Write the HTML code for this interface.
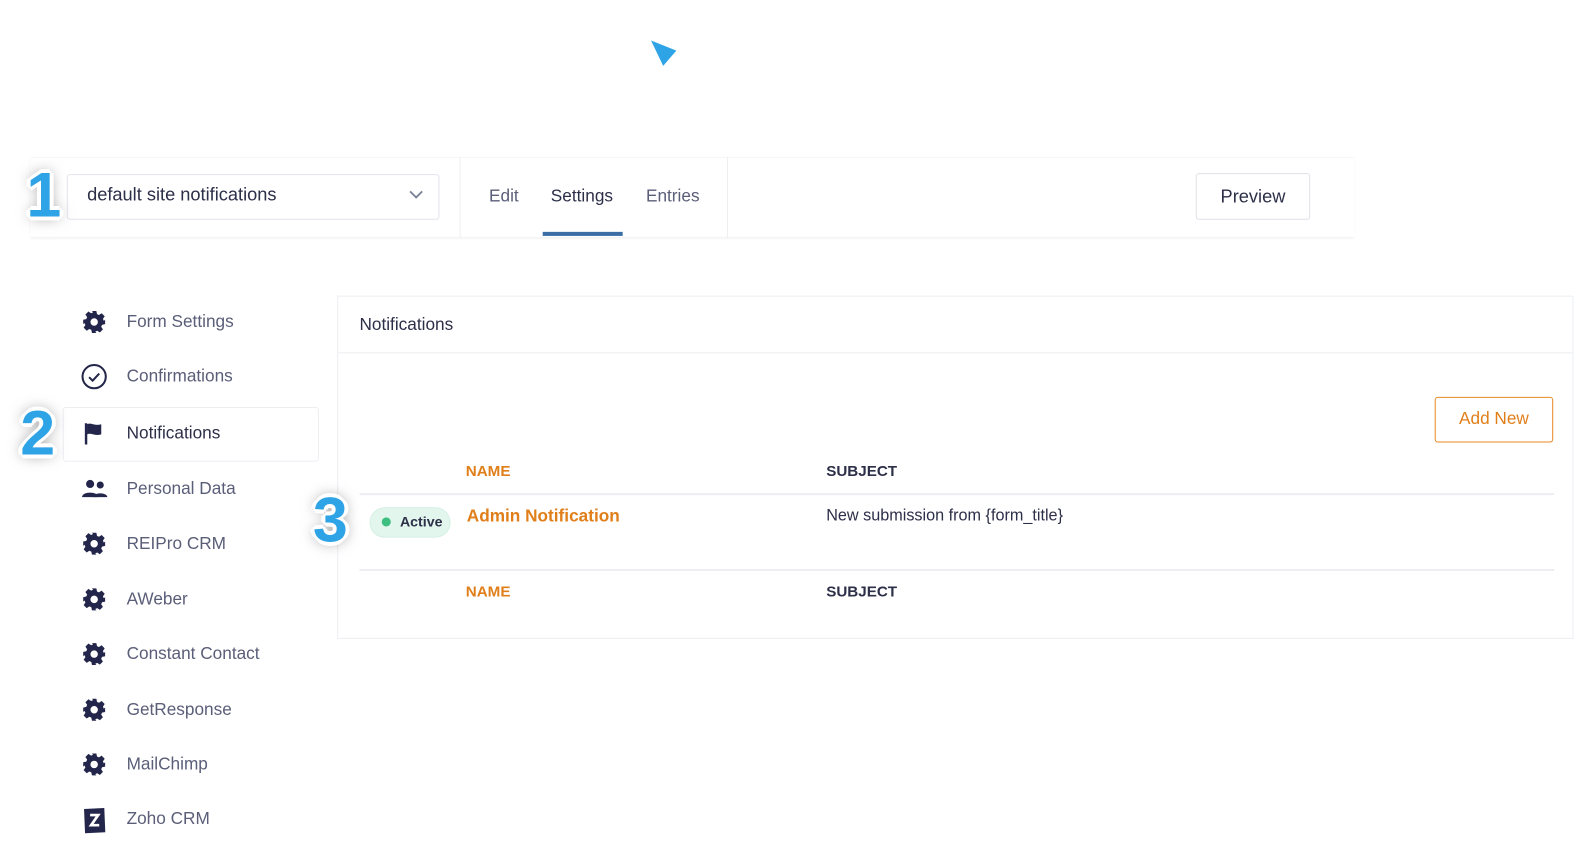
<!DOCTYPE html>
<html><head><meta charset="utf-8"><style>
*{margin:0;padding:0;box-sizing:border-box}
body{width:1586px;height:837px;background:#fff;font-family:"Liberation Sans",sans-serif;position:relative;overflow:hidden;color:#2c2f48}
#w{position:absolute;left:0;top:0;width:1586px;height:837px;transform:scale(1.0125);transform-origin:0 0}
.a{position:absolute}
.num{position:absolute;font-family:"Liberation Sans",sans-serif;font-weight:bold;font-size:62px;color:#2ea3e6;line-height:1;
text-shadow:3px 0 0 #fff,-3px 0 0 #fff,0 3px 0 #fff,0 -3px 0 #fff,2px 2px 0 #fff,-2px 2px 0 #fff,2px -2px 0 #fff,-2px -2px 0 #fff,4px 0 0 #fff,-4px 0 0 #fff,0 4px 0 #fff,0 -4px 0 #fff,0 0 14px rgba(0,0,0,.5)}
.nav{position:absolute;left:80px;font-size:17px;color:#5a5e78}
.nav svg{position:absolute;left:0;top:-3px}
.nav span{position:absolute;left:45px;top:0;white-space:nowrap}
.hd{font-weight:bold;font-size:15px;position:absolute}
</style></head><body><div id="w">
<svg class="a" style="left:0;top:0" width="1586" height="100"><polygon points="643,40 668,50 655,65" fill="#2ea3e6"/></svg>

<div class="a" style="left:30px;top:155px;width:1308px;height:79px;background:#fff;box-shadow:0 2px 3px rgba(0,0,0,.06);border-top:1px solid #f7f7f9"></div>
<div class="a" style="left:454px;top:155px;width:1px;height:79px;background:#eceef2"></div>
<div class="a" style="left:718px;top:155px;width:1px;height:79px;background:#eceef2"></div>
<div class="a" style="left:66px;top:172px;width:368px;height:45px;border:1px solid #e2e4ea;border-radius:3px;background:#fff"></div>
<div class="a" style="left:86px;top:182px;font-size:18px;color:#2c2f48">default site notifications</div>
<svg class="a" style="left:403px;top:186px" width="16" height="12"><path d="M2 3l6 6 6-6" stroke="#7b7f95" stroke-width="1.8" fill="none"/></svg>
<div class="a" style="left:483px;top:184px;font-size:17px;color:#5a5e78">Edit</div>
<div class="a" style="left:544px;top:184px;font-size:17px;color:#2c2f48">Settings</div>
<div class="a" style="left:536px;top:229px;width:79px;height:4px;background:#3a6ea5"></div>
<div class="a" style="left:638px;top:184px;font-size:17px;color:#5a5e78">Entries</div>
<div class="a" style="left:1181px;top:171px;width:113px;height:46px;border:1px solid #dfe1e7;border-radius:3px;font-size:18px;color:#2c2f48;text-align:center;line-height:44px">Preview</div>
<div class="num" style="left:26px;top:163px">1</div>

<svg width="0" height="0" style="position:absolute"><defs><symbol id="g" viewBox="0 0 24 24"><path fill="#23264a" d="M10 2h4l.6 2.8 1.8.8 2.4-1.6 2.8 2.8-1.6 2.4.8 1.8L22 10v4l-2.8.6-.8 1.8 1.6 2.4-2.8 2.8-2.4-1.6-1.8.8L14 22h-4l-.6-2.8-1.8-.8-2.4 1.6-2.8-2.8 1.6-2.4-.8-1.8L2 14v-4l2.8-.6.8-1.8L4 5.2 6.8 2.4l2.4 1.6 1.8-.8zM12 8.6a3.4 3.4 0 100 6.8 3.4 3.4 0 000-6.8z"/></symbol></defs></svg>

<div class="nav" style="top:308px"><svg width="26" height="26"><use href="#g"/></svg><span>Form Settings</span></div>
<div class="nav" style="top:362px"><svg width="26" height="26"><circle cx="13" cy="13" r="11.5" stroke="#23264a" stroke-width="2" fill="none"/><path d="M8 13.5l3.5 3.5 6.5-7" stroke="#23264a" stroke-width="2" fill="none"/></svg><span>Confirmations</span></div>
<div class="a" style="left:62px;top:402px;width:253px;height:54px;border:1px solid #eceef2;border-radius:3px;background:#fff"></div>
<div class="nav" style="top:418px;color:#2c2f48"><svg width="26" height="26"><path d="M5 3v21" stroke="#23264a" stroke-width="2.4"/><path d="M6 4c4-2 7 2 14 0v10c-7 2-10-2-14 0z" fill="#23264a"/></svg><span>Notifications</span></div>
<div class="nav" style="top:473px"><svg width="28" height="26"><circle cx="9" cy="8" r="4" fill="#23264a"/><circle cx="19" cy="9" r="3.5" fill="#23264a"/><path d="M1 21c0-6 16-6 16 0z" fill="#23264a"/><path d="M12 21c0-5 14-5 14 0z" fill="#23264a"/></svg><span>Personal Data</span></div>
<div class="nav" style="top:527px"><svg width="26" height="26"><use href="#g"/></svg><span>REIPro CRM</span></div>
<div class="nav" style="top:582px"><svg width="26" height="26"><use href="#g"/></svg><span>AWeber</span></div>
<div class="nav" style="top:636px"><svg width="26" height="26"><use href="#g"/></svg><span>Constant Contact</span></div>
<div class="nav" style="top:691px"><svg width="26" height="26"><use href="#g"/></svg><span>GetResponse</span></div>
<div class="nav" style="top:745px"><svg width="26" height="26"><use href="#g"/></svg><span>MailChimp</span></div>
<div class="nav" style="top:799px"><svg width="26" height="28"><path d="M3 3l20-1 1 24-20 1z" fill="#23264a"/><path d="M9 9h8l-7 10h8" stroke="#fff" stroke-width="2.6" fill="none"/></svg><span>Zoho CRM</span></div>
<div class="num" style="left:20px;top:398px">2</div>

<div class="a" style="left:333px;top:292px;width:1221px;height:339px;border:1px solid #eceef2;background:#fff"></div>
<div class="a" style="left:333px;top:348px;width:1221px;height:1px;background:#eceef2"></div>
<div class="a" style="left:355px;top:311px;font-size:17px;color:#2c2f48">Notifications</div>
<div class="a" style="left:1417px;top:392px;width:117px;height:45px;border:1.5px solid #e98a22;border-radius:3px;color:#e07f1a;font-size:17px;text-align:center;line-height:42px">Add New</div>
<div class="hd" style="left:460px;top:457px;color:#e07f1a">NAME</div>
<div class="hd" style="left:816px;top:457px;color:#2c2f48">SUBJECT</div>
<div class="a" style="left:355px;top:487px;width:1180px;height:2px;background:#eceef4"></div>
<div class="a" style="left:365px;top:501px;width:80px;height:30px;border-radius:15px;background:#e3f6ee;border:1px solid #d4efe3"></div>
<div class="a" style="left:377px;top:511px;width:9px;height:9px;border-radius:50%;background:#3cbf7f"></div>
<div class="a" style="left:395px;top:507px;font-size:14px;font-weight:bold;color:#2c2f48">Active</div>
<div class="a" style="left:461px;top:500px;font-size:17px;font-weight:bold;color:#e07f1a">Admin Notification</div>
<div class="a" style="left:816px;top:501px;font-size:16px;color:#2c2f48">New submission from {form_title}</div>
<div class="a" style="left:355px;top:562px;width:1180px;height:2px;background:#eceef4"></div>
<div class="hd" style="left:460px;top:576px;color:#e07f1a">NAME</div>
<div class="hd" style="left:816px;top:576px;color:#2c2f48">SUBJECT</div>
<div class="num" style="left:309px;top:484px">3</div>
</div></body></html>
